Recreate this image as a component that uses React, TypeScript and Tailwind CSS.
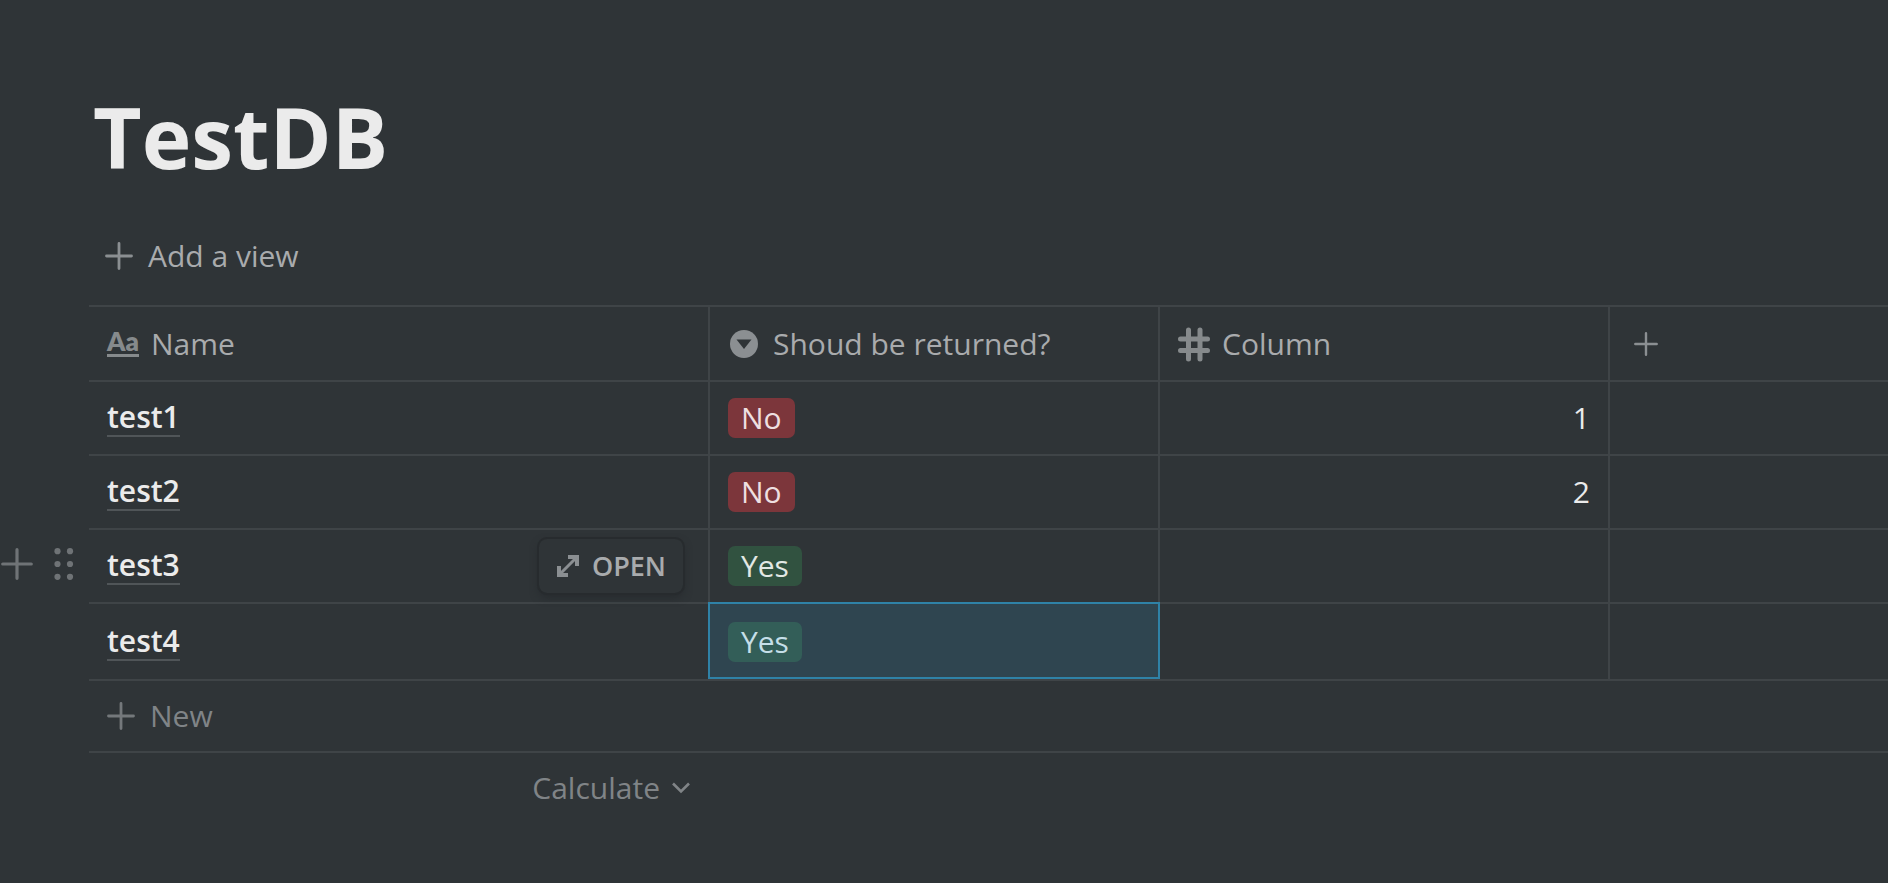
import React from "react";

type Tag = "No" | "Yes";
type Row = { name: string; tag: Tag; value: string; hovered?: boolean; selected?: boolean };

const rows: Row[] = [
  { name: "test1", tag: "No", value: "1" },
  { name: "test2", tag: "No", value: "2" },
  { name: "test3", tag: "Yes", value: "", hovered: true },
  { name: "test4", tag: "Yes", value: "", selected: true },
];

function PlusIcon({ className }: { className: string }) {
  return (
    <svg viewBox="0 0 28 28" className={className} fill="none" stroke="currentColor" strokeWidth="2.8" strokeLinecap="round" aria-hidden="true">
      <path d="M14 1.5v25M1.5 14h25" />
    </svg>
  );
}

function TitleIcon() {
  return (
    <span aria-hidden="true" className="flex h-[26px] w-8 flex-col border-b-[3px] border-[#868a8c] font-['Lato','Open_Sans',sans-serif] text-[26px] leading-[20px] font-extrabold text-[#868a8c]">
      Aa
    </span>
  );
}

function SelectIcon() {
  return (
    <svg viewBox="0 0 28 28" className="size-7" aria-hidden="true">
      <circle cx="14" cy="14" r="14" fill="#8b8f92" />
      <path d="M6.5 9.5h15L14 19z" fill="#2f3437" />
    </svg>
  );
}

function NumberIcon() {
  return (
    <svg viewBox="0 0 32 36" className="h-9 w-8" fill="none" stroke="#868a8c" strokeWidth="5" strokeLinecap="round" aria-hidden="true">
      <path d="M10.5 4v29M22 4v29M2.5 13h27M2.5 24.5h27" />
    </svg>
  );
}

function OpenIcon() {
  return (
    <svg viewBox="0 0 24 24" className="size-6" fill="none" stroke="#8b8f92" aria-hidden="true">
      <path strokeWidth="4" d="M12 3h9v9M3 12v9h9" />
      <path strokeWidth="3" d="M20.5 3.5l-17 17" />
    </svg>
  );
}

function DragIcon() {
  return (
    <svg viewBox="0 0 20 32" className="h-8 w-5" fill="currentColor" aria-hidden="true">
      {[3.2, 16, 28.8].map((y) => (
        <g key={y}>
          <circle cx="3.5" cy={y} r="3.1" />
          <circle cx="16" cy={y} r="3.1" />
        </g>
      ))}
    </svg>
  );
}

const tagStyle = {
  No: "bg-[#7c363b] text-[#eedfe0]",
  Yes: "bg-[#315240] text-[#e2e8e4]",
};

function TagPill({ tag, selected }: { tag: Tag; selected?: boolean }) {
  return (
    <span className={`inline-flex h-10 items-center rounded-[7px] px-[13px] ${selected ? "bg-[#335e58] text-[#c5dfe8]" : tagStyle[tag]}`}>
      {tag}
    </span>
  );
}

const line = "border-[#3f4447]";

export default function App() {
  return (
    <main className="min-h-screen bg-[#2f3437] pt-[84px] pl-[89px] font-['Open_Sans','Noto_Sans',sans-serif] text-[30px] leading-10 text-[#a9abad]">
      <h1 className="pl-1 text-[84px] leading-[106px] font-bold text-[#ebebeb]">TestDB</h1>
      <div className="flex h-[115px] items-center pt-4">
        <button type="button" className="flex items-center gap-[15px] pl-4">
          <PlusIcon className="size-7 text-[#8b8f92]" />
          Add a view
        </button>
      </div>

      <table className={`w-full table-fixed border-separate border-spacing-0 border-t-2 ${line}`}>
        <colgroup>
          <col className="w-[621px]" />
          <col className="w-[450px]" />
          <col className="w-[450px]" />
          <col />
        </colgroup>
        <thead>
          <tr className="h-[75px] text-left">
            <th scope="col" className={`border-r-2 border-b-2 pl-[18px] font-normal ${line}`}>
              <span className="flex items-center gap-3"><TitleIcon />Name</span>
            </th>
            <th scope="col" className={`border-r-2 border-b-2 pl-5 font-normal ${line}`}>
              <span className="flex items-center gap-[15px]"><SelectIcon />Shoud be returned?</span>
            </th>
            <th scope="col" className={`border-r-2 border-b-2 pl-[18px] font-normal ${line}`}>
              <span className="flex items-center gap-3"><NumberIcon />Column</span>
            </th>
            <th scope="col" className={`border-b-2 pl-6 font-normal ${line}`}>
              <button type="button" aria-label="Add a column" className="flex">
                <PlusIcon className="size-6 text-[#8b8f92]" />
              </button>
            </th>
          </tr>
        </thead>
        <tbody>
          {rows.map((row) => (
            <tr key={row.name} className={row.selected ? "h-[77px]" : "h-[74px]"}>
              <td className={`relative border-r-2 border-b-2 pl-[18px] ${line}`}>
                {row.hovered && (
                  <span className="absolute top-[18px] -left-[88px] flex items-center gap-[21px] text-[#6f7376]">
                    <button type="button" aria-label="Add a row"><PlusIcon className="size-8" /></button>
                    <button type="button" aria-label="Move row"><DragIcon /></button>
                  </span>
                )}
                <span className="flex items-center justify-between pr-[25px]">
                  <a href="#" className="border-b-2 border-[#505558] leading-9 font-semibold text-[#ebebeb]">{row.name}</a>
                  {row.hovered && (
                    <button type="button" className="flex h-[54px] items-center gap-3 rounded-lg px-[17px] text-[27px] font-semibold shadow-[0_0_0_2px_#272b2e,0_4px_8px_#262a2d]">
                      <OpenIcon />OPEN
                    </button>
                  )}
                </span>
              </td>
              <td className={`relative border-r-2 border-b-2 pl-[18px] ${line}`}>
                {row.selected && <span className="absolute -inset-x-0.5 -top-0.5 bottom-0 border-2 border-[#2f82a7] bg-[#2f4550]" />}
                <span className="relative flex"><TagPill tag={row.tag} selected={row.selected} /></span>
              </td>
              <td className={`border-r-2 border-b-2 pr-[18px] text-right text-[#ebebeb] ${line}`}>{row.value}</td>
              <td className={`border-b-2 ${line}`} />
            </tr>
          ))}
          <tr className="h-[72px]">
            <td colSpan={4} className={`border-b-2 pl-[18px] ${line}`}>
              <button type="button" className="flex items-center gap-[15px] text-[#808487]">
                <PlusIcon className="size-7 text-[#74787b]" />
                New
              </button>
            </td>
          </tr>
        </tbody>
        <tfoot>
          <tr className="h-[70px]">
            <td className="pr-5">
              <button type="button" className="ml-auto flex items-center gap-3 text-[#808487]">
                Calculate
                <svg viewBox="0 0 18 12" className="h-3 w-[18px]" fill="none" stroke="currentColor" strokeWidth="2.6" aria-hidden="true">
                  <path d="M1 1.5l8 8 8-8" />
                </svg>
              </button>
            </td>
            <td colSpan={3} />
          </tr>
        </tfoot>
      </table>
    </main>
  );
}
